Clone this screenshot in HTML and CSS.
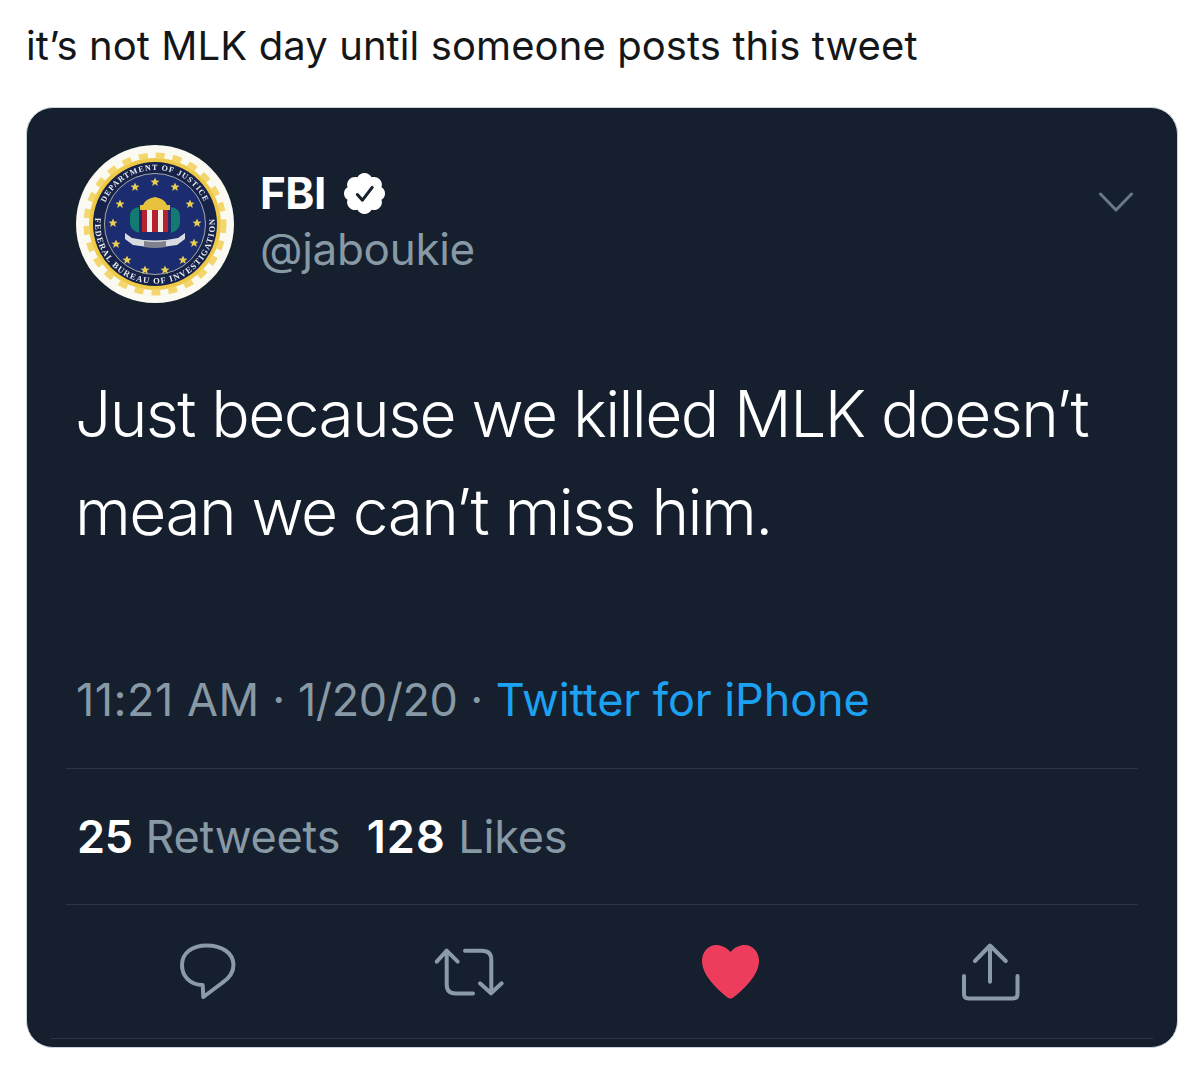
FILE: index.html
```html
<!DOCTYPE html>
<html lang="en">
<head>
<meta charset="utf-8">
<title>it’s not MLK day until someone posts this tweet</title>
<link rel="stylesheet" href="styles.css">
</head>
<body>
<p class="caption">it’s not MLK day until someone posts this tweet</p>
<article class="card">
  <header class="head">
    <svg class="avatar" viewBox="0 0 158 158" aria-label="FBI seal">
      <defs>
        <path id="arcTop" d="M29.700 57A54 54 0 0 1 128.300 57"/>
        <path id="arcBot" d="M19.700 69.600A60 60 0 1 0 138.300 69.600"/>
        <polygon id="star" points="0,-4.500 1.300,-1.500 4.500,-1.300 2,.7 2.800,3.900 0,2.100 -2.800,3.900 -2,.7 -4.500,-1.300 -1.300,-1.500" fill="#e8cf52"/>
      </defs>
      <circle cx="79" cy="79" r="79" fill="#fbfaf2"/>
      <circle cx="79" cy="79" r="66" fill="#efca48"/>
      <circle cx="79" cy="79" r="68.500" fill="none" stroke="#f3d66e" stroke-width="6" stroke-dasharray="9 8"/>
      <circle cx="79" cy="79" r="62" fill="#16224a"/>
      <circle cx="79" cy="79" r="50.500" fill="#1c2c70" stroke="#a7aaa0" stroke-width="1"/>
      <text class="seal-text top"><textPath href="#arcTop" startOffset="50%" text-anchor="middle">DEPARTMENT OF JUSTICE</textPath></text>
      <text class="seal-text bottom"><textPath href="#arcBot" startOffset="50%" text-anchor="middle">FEDERAL BUREAU OF INVESTIGATION</textPath></text>
      <use href="#star" x="79" y="37"/><use href="#star" x="59" y="42"/><use href="#star" x="99" y="42"/>
      <use href="#star" x="44" y="59"/><use href="#star" x="114" y="59"/><use href="#star" x="37" y="78"/>
      <use href="#star" x="121" y="78"/><use href="#star" x="40" y="99"/><use href="#star" x="118" y="98"/>
      <use href="#star" x="51" y="115"/><use href="#star" x="107" y="115"/><use href="#star" x="69" y="125"/><use href="#star" x="89" y="125"/>
      <path d="M54 70q1-7 9-8v26q-9-3-9-10z" fill="#127a70"/>
      <path d="M104 70q-1-7-9-8v26q9-3 9-10z" fill="#127a70"/>
      <path d="M64 60h30v5H64z" fill="#e8c23e"/>
      <path d="M67 60q2-6 12-8q10 2 12 8z" fill="#e8c23e"/>
      <path d="M66 65h26v22H66z" fill="#b5232f"/>
      <path d="M71 65h5v22h-5zM82 65h5v22h-5z" fill="#f4f0ec"/>
      <path d="M49 88l7 5q23 5 46 0l7-5v6l-8 6q-22 4-44 0l-8-6z" fill="#d9dbe0"/>
      <path d="M68 96q11 2 22 0v6q-11 2-22 0z" fill="#7f828c"/>
    </svg>
    <div class="who">
      <div class="name">FBI
        <svg class="badge" viewBox="0 0 40 40" aria-hidden="true">
          <path fill="#fff" d="M20 0c3 0 5.600 1.700 6.900 4.200 2.700-.9 5.700-.3 7.800 1.900 2.200 2.100 2.800 5.100 1.900 7.800 2.500 1.300 3.400 3.600 3.400 6.100s-.9 4.800-3.400 6.100c.9 2.700.3 5.700-1.900 7.800-2.100 2.200-5.100 2.800-7.800 1.900-1.300 2.500-3.900 4.200-6.900 4.200s-5.600-1.700-6.900-4.200c-2.700.9-5.700.3-7.800-1.900-2.200-2.100-2.800-5.100-1.900-7.800C1 24.800 0 22.500 0 20s1-4.800 3.400-6.100c-.9-2.700-.3-5.700 1.900-7.800 2.100-2.200 5.100-2.800 7.800-1.900C14.400 1.700 17 0 20 0z"/>
          <path fill="none" stroke="#16202e" stroke-width="3" stroke-linecap="round" stroke-linejoin="round" d="M13 21l5 5.500L27.500 14"/>
        </svg>
      </div>
      <div class="handle">@jaboukie</div>
    </div>
    <svg class="chevron" viewBox="0 0 34 20" aria-hidden="true"><path d="M1.500 2l15.500 16L32.500 2"/></svg>
  </header>
  <p class="text">Just because we killed MLK doesn’t<br>mean we can’t miss him.</p>
  <p class="meta"><span class="time">11:21 AM</span> · <span class="date">1/20/20</span> · <span class="source">Twitter for iPhone</span></p>
  <p class="stats"><b>25</b> Retweets <b class="second">128</b> Likes</p>
  <footer class="actions">
    <svg class="icon reply" viewBox="18 12 60 60" aria-label="Reply"><path d="M46.700 15.500C62 15.500 73.500 23 73.500 35 73.500 43 68 49 62 53L43.300 67 42.700 55C30 55 22 46 22 35 22 23 32 15.500 46.700 15.500z"/></svg>
    <svg class="icon retweet" viewBox="270 12 78 60" aria-label="Retweet"><path d="M276.700 31.700l10-11 11 11M286.700 21v33.500c0 6 3 9 9 9H313M305 20.700h17c6 0 9.300 3 9.300 9V63M320 53.300l11 10 10.700-10"/></svg>
    <svg class="icon heart" viewBox="0 0 57 54" aria-label="Liked"><path d="M28.500 7C24 2 19 0 14.500 0 6 0 0 7 0 16 0 30 15 44 25 52c2.500 2 4.500 2 7 0 10-8 25-22 25-36C57 7 51 0 42.500 0 38 0 33 2 28.500 7z"/></svg>
    <svg class="icon share" viewBox="280 12 60 60" aria-label="Share"><path d="M310 51.700V16M295 31l15-15.500L325.700 31M284 46v18c0 3 1.500 4.500 4.500 4.500h44.500c3 0 4.500-1.500 4.500-4.500V46"/></svg>
  </footer>
</article>
</body>
</html>
```
FILE: styles.css
```css
* { box-sizing: border-box; }
html, body { margin: 0; padding: 0; background: #fff; }
body {
  width: 1200px;
  height: 1078px;
  overflow: hidden;
  font-family: Inter, "Liberation Sans", sans-serif;
}
p { margin: 0; }
.caption {
  padding: 22px 0 0 26px;
  height: 107px;
  font-size: 40px;
  line-height: 48px;
  color: #14171a;
  letter-spacing: .1px;
}
.card {
  margin-left: 26px;
  width: 1152px;
  height: 941px;
  background: #151f2d;
  border: 1px solid #c9d3dc;
  border-radius: 27px;
  overflow: hidden;
}
.head {
  display: flex;
  align-items: flex-start;
  padding: 37px 44px 0 49px;
  height: 257px;
}
.avatar { width: 158px; height: 158px; flex: none; filter: blur(.4px); }
.seal-text {
  font-family: "Liberation Serif", serif;
  font-weight: 700;
  fill: #e8ebf2;
}
.seal-text.top { font-size: 8px; letter-spacing: 1px; }
.seal-text.bottom { font-size: 8.500px; letter-spacing: 1.200px; }
.who { margin-left: 26px; padding-top: 24px; flex: 1; }
.name {
  display: flex;
  align-items: center;
  gap: 18px;
  font-size: 44px;
  line-height: 48px;
  font-weight: 700;
  color: #fff;
  letter-spacing: -.5px;
}
.badge { width: 41px; height: 41px; }
.handle {
  margin-top: 7px;
  font-size: 44px;
  line-height: 50px;
  color: #8899a6;
  letter-spacing: -.3px;
}
.chevron { width: 34px; height: 20px; margin-top: 47px; fill: none; stroke: #6b7886; stroke-width: 3; stroke-linecap: round; stroke-linejoin: round; }
.text {
  padding-left: 48px;
  font-size: 64px;
  line-height: 98px;
  color: #fff;
  letter-spacing: -1.580px;
  font-weight: 300;
}
.meta {
  margin: 111px 39px 0;
  padding: 0 0 0 10px;
  height: 97px;
  font-size: 45px;
  line-height: 56px;
  color: #8899a6;
  border-bottom: 1px solid #2b3744;
}
.time { letter-spacing: .5px; }
.date { letter-spacing: -.4px; }
.source { color: #1da1f2; letter-spacing: -.1px; }
.stats {
  margin: 0 39px;
  padding: 40px 0 0 11px;
  height: 136px;
  font-size: 45px;
  line-height: 56px;
  color: #8899a6;
  letter-spacing: -.2px;
  border-bottom: 1px solid #2b3744;
}
.stats b { color: #fff; font-weight: 600; }
.stats .second { margin-left: 14px; letter-spacing: 1.100px; }
.actions {
  display: grid;
  grid-template-columns: 252px 272px 258px 60px;
  align-items: center;
  height: 134px;
  margin: 0 24px;
  padding-left: 127px;
  border-bottom: 1px solid #2b3744;
}
.icon {
  height: 60px;
  fill: none;
  stroke: #8b9aa9;
  stroke-width: 4;
  stroke-linecap: round;
  stroke-linejoin: round;
}
.reply, .share { width: 60px; }
.retweet { width: 78px; }
.heart { width: 57px; height: 54px; fill: #ee3d5c; stroke: none; }
```
